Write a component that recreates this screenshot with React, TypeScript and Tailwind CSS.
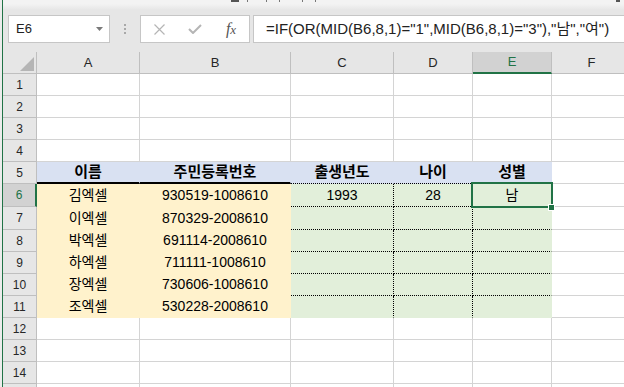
import React from 'react';

// ─── Sheet data ──────────────────────────────────────────────────────────────
const people = [
  { name: '김엑셀', id: '930519-1008610' },
  { name: '이엑셀', id: '870329-2008610' },
  { name: '박엑셀', id: '691114-2008610' },
  { name: '하엑셀', id: '711111-1008610' },
  { name: '장엑셀', id: '730606-1008610' },
  { name: '조엑셀', id: '530228-2008610' },
];

const COLS = [
  { key: 'A', w: 'w-[103px]' },
  { key: 'B', w: 'w-[151px]' },
  { key: 'C', w: 'w-[103px]' },
  { key: 'D', w: 'w-[79px]' },
  { key: 'E', w: 'w-[79px]' },
  { key: 'F', w: 'w-[80px]' },
];

const GRID = 'border-r border-b border-[#d4d4d4] bg-white';
const BLUE = 'bg-[#d9e1f2] border-r border-r-[#d9e1f2]';
const YELLOW = 'bg-[#fff2cc] border-r border-b border-[#fff2cc]';
const GREEN_INNER = 'bg-[#e2efda] border-r border-b border-dotted border-black';
const GREEN_LAST_ROW = 'bg-[#e2efda] border-r border-b border-dotted border-r-black border-b-[#e2efda]';
const GREEN_E = 'bg-[#e2efda] border-r border-b border-dotted border-r-[#e2efda] border-b-black';
const GREEN_E_LAST = 'bg-[#e2efda] border-r border-b border-[#e2efda]';

function cellStyle(row: number, col: number): string {
  if (row === 5) {
    if (col <= 1) return `${BLUE} border-b-2 border-b-black`;
    if (col <= 4) return `${BLUE} border-b border-dotted border-b-black`;
    return GRID;
  }
  if (row >= 6 && row <= 11) {
    if (col <= 1) return YELLOW;
    if (col <= 3) return row === 11 ? GREEN_LAST_ROW : GREEN_INNER;
    if (col === 4) return row === 11 ? GREEN_E_LAST : GREEN_E;
  }
  return GRID;
}

function cellText(row: number, col: number): string {
  if (row === 5) return ['이름', '주민등록번호', '출생년도', '나이', '성별', ''][col];
  if (row >= 6 && row <= 11) {
    const p = people[row - 6];
    if (col === 0) return p.name;
    if (col === 1) return p.id;
    if (row === 6) return ['', '', '1993', '28', '남', ''][col];
  }
  return '';
}

// ─── Formula bar ─────────────────────────────────────────────────────────────
function FormulaBar() {
  return (
    <div className="h-[32px] pt-[3px] flex items-start">
      <div className="ml-[5px] w-[102px] h-[28px] bg-white border border-[#c6c6c6] flex items-center justify-between pl-[7px] pr-[6px]">
        <span className="text-[13px] text-[#222]">E6</span>
        <svg width="7" height="4" viewBox="0 0 7 4"><polygon points="0,0 7,0 3.5,4" fill="#7a7a7a" /></svg>
      </div>
      <div className="w-[30px] h-[28px] flex flex-col items-center justify-center gap-[2px]">
        <span className="w-[2px] h-[2px] bg-[#a8a8a8]" />
        <span className="w-[2px] h-[2px] bg-[#a8a8a8]" />
        <span className="w-[2px] h-[2px] bg-[#a8a8a8]" />
      </div>
      <div className="w-[110px] h-[28px] bg-white border border-[#c6c6c6] flex items-center">
        <div className="w-[36px] flex justify-center">
          <svg width="11" height="11" viewBox="0 0 11 11">
            <path d="M0.5 0.5 L10.5 10.5 M10.5 0.5 L0.5 10.5" stroke="#b5b5b5" strokeWidth="1.2" />
          </svg>
        </div>
        <div className="w-[36px] flex justify-center">
          <svg width="14" height="10" viewBox="0 0 14 10">
            <polyline points="1,5 5,9 13,1" fill="none" stroke="#b5b5b5" strokeWidth="2" />
          </svg>
        </div>
        <div className="w-[36px] flex justify-center items-baseline font-['Liberation_Serif',serif] italic text-[#555]">
          <span className="text-[16px] leading-none">f</span>
          <span className="text-[13px] leading-none">x</span>
        </div>
      </div>
      <div className="ml-[3px] flex-1 h-[28px] bg-white border border-r-0 border-[#c6c6c6] flex items-center pl-[12px] whitespace-nowrap overflow-hidden">
        <span className="text-[15px] text-[#222]">=IF(OR(MID(B6,8,1)="1",MID(B6,8,1)="3"),"남","여")</span>
      </div>
    </div>
  );
}

// ─── Column header ───────────────────────────────────────────────────────────
function ColumnHeader() {
  return (
    <div className="h-[22px] flex shrink-0">
      <div className="w-[34px] shrink-0 border-r border-b border-[#bfbfbf] flex items-end justify-end pr-[2px] pb-[2px]">
        <svg width="14" height="14" viewBox="0 0 14 14"><polygon points="14,0 14,14 0,14" fill="#b5b5b5" /></svg>
      </div>
      {COLS.map((c) =>
        c.key === 'E' ? (
          <div key={c.key} className={`${c.w} shrink-0 bg-[#d2d2d2] border-r border-r-[#bfbfbf] border-b-2 border-b-[#217346] flex items-center justify-center text-[13px] text-[#217346]`}>
            {c.key}
          </div>
        ) : (
          <div key={c.key} className={`${c.w} shrink-0 border-r border-b border-[#bfbfbf] flex items-center justify-center text-[13px] text-[#262626]`}>
            {c.key}
          </div>
        )
      )}
    </div>
  );
}

// ─── Sheet rows ──────────────────────────────────────────────────────────────
function SheetRow({ row }: { row: number }) {
  const tall = row === 6 || row === 7;
  const selected = row === 6;
  // row 15 only peeks in at the bottom edge, its number is not visible
  const label = row < 15 ? row : '';
  return (
    <div className={`${tall ? 'h-[23px]' : 'h-[22px]'} flex shrink-0`}>
      <div
        className={
          selected
            ? 'w-[34px] shrink-0 bg-[#d2d2d2] border-r-2 border-r-[#217346] border-b border-b-[#bfbfbf] flex items-center justify-center text-[12px] text-[#217346]'
            : 'w-[34px] shrink-0 border-r border-b border-[#bfbfbf] flex items-center justify-center text-[12px] text-[#262626]'
        }
      >
        {label}
      </div>
      {COLS.map((c, i) => {
        const text = cellText(row, i);
        return (
          <div
            key={c.key}
            className={`${c.w} ${cellStyle(row, i)} shrink-0 relative flex items-center justify-center text-black ${row === 5 ? 'text-[15px] font-bold' : 'text-[14px]'}`}
          >
            {text}
            {row === 6 && c.key === 'E' && (
              <>
                <div className="absolute left-[-2px] top-[-2px] w-[82px] h-[26px] border-2 border-[#217346] z-10" />
                <div className="absolute left-[75px] top-[20px] w-[7px] h-[7px] bg-[#217346] border border-white z-20" />
              </>
            )}
          </div>
        );
      })}
    </div>
  );
}

export default function App() {
  const rows = Array.from({ length: 15 }, (_, i) => i + 1);
  return (
    <div className="w-[624px] h-[387px] overflow-hidden flex bg-[#e6e6e6] font-['Liberation_Sans','Noto_Sans_CJK_KR',sans-serif]">
      <div className="w-[2px] shrink-0 bg-[#ececec]" />
      <div className="w-px shrink-0 bg-[#217346]" />
      <div className="flex-1 min-w-0 flex flex-col">
        {/* ribbon edge */}
        <div className="h-[12px] shrink-0 bg-[linear-gradient(#f3f3f3_0px,#f3f3f3_4px,#e6e6e6_10px)]">
          <div className="flex h-[2px]">
            <span className="ml-[228px] w-[8px] h-[2px] bg-[#555]" />
            <span className="ml-[8px] w-[1px] h-[2px] bg-[#777]" />
            <span className="ml-[18px] w-[1px] h-[2px] bg-[#777]" />
            <span className="ml-[12px] w-[1px] h-[2px] bg-[#777]" />
            <span className="ml-[22px] w-[1px] h-[2px] bg-[#777]" />
            <span className="ml-[12px] w-[1px] h-[2px] bg-[#777]" />
            <span className="ml-[300px] w-[4px] h-[2px] bg-[#555]" />
          </div>
        </div>
        <FormulaBar />
        <div className="h-[9px] shrink-0" />
        <ColumnHeader />
        {rows.map((r) => (
          <SheetRow key={r} row={r} />
        ))}
      </div>
    </div>
  );
}
